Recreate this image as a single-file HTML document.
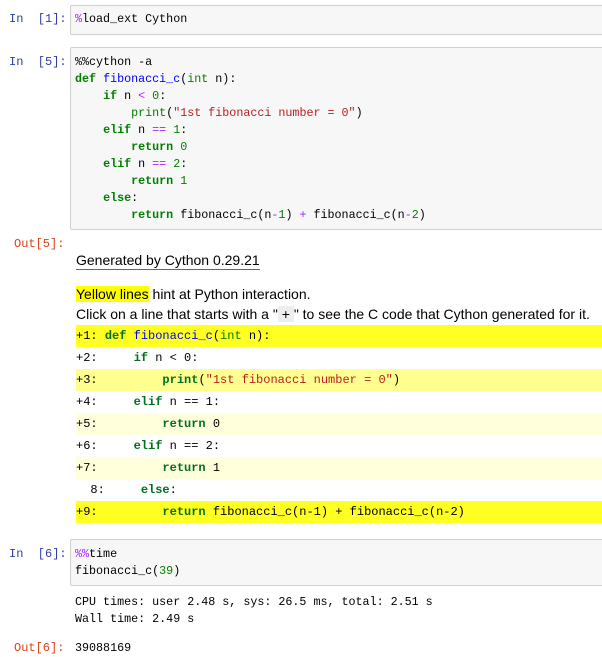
<!DOCTYPE html>
<html><head><style>
body{margin:0;background:#fff;width:602px;height:657px;overflow:hidden;position:relative;font-family:"Liberation Mono",monospace;}
.p{position:absolute;font-size:12px;color:#303f9f;white-space:pre;}
.o{color:#d84315;}
.box{position:absolute;left:70px;width:540px;background:#f7f7f7;border:1px solid #cfcfcf;border-radius:2px;box-sizing:border-box;}
.code{position:absolute;left:75px;font-size:11.7px;line-height:17px;white-space:pre;color:#000;}
.k{color:#008000;font-weight:bold}.f{color:#0000ff}.m{color:#aa22ff}.n{color:#008000}.s{color:#ba2121}
.sans{font-family:"Liberation Sans",sans-serif;font-size:14px;position:absolute;left:76px;white-space:pre;color:#000}
.ln{position:absolute;left:76px;width:526px;height:22px;line-height:22px;font-size:12px;white-space:pre;}
.ln .k{color:#007020}
</style></head><body>
<div class="p" style="left:9px;top:12px">In  [1]:</div>
<div class="box" style="top:5px;height:30px"></div>
<div class="code" style="top:11px"><span class="m">%</span>load_ext Cython</div>

<div class="p" style="left:9px;top:55px">In  [5]:</div>
<div class="box" style="top:47px;height:183px"></div>
<div class="code" style="top:54px">%%cython -a
<span class="k">def</span> <span class="f">fibonacci_c</span>(<span class="n">int</span> n):
    <span class="k">if</span> n <span class="m">&lt;</span> <span class="n">0</span>:
        <span class="n">print</span>(<span class="s">"1st fibonacci number = 0"</span>)
    <span class="k">elif</span> n <span class="m">==</span> <span class="n">1</span>:
        <span class="k">return</span> <span class="n">0</span>
    <span class="k">elif</span> n <span class="m">==</span> <span class="n">2</span>:
        <span class="k">return</span> <span class="n">1</span>
    <span class="k">else</span>:
        <span class="k">return</span> fibonacci_c(n<span class="m">-</span><span class="n">1</span>) <span class="m">+</span> fibonacci_c(n<span class="m">-</span><span class="n">2</span>)</div>

<div class="p o" style="left:14px;top:237px">Out[5]:</div>
<div class="sans" style="top:252px;border-bottom:1px solid #666;padding-bottom:1px">Generated by Cython 0.29.21</div>
<div class="sans" style="top:286px"><span style="background:#ffff00">Yellow lines</span> hint at Python interaction.</div>
<div class="sans" style="top:306px">Click on a line that starts with a "<span style="background:#eee"> + </span>" to see the C code that Cython generated for it.</div>

<div class="ln" style="top:325px;background:#ffff22">+1: <span class="k">def</span> <span class="f">fibonacci_c</span>(<span class="n">int</span> n):</div>
<div class="ln" style="top:347px;background:#fff">+2:     <span class="k">if</span> n &lt; 0:</div>
<div class="ln" style="top:369px;background:#ffff8f">+3:         <span class="k">print</span>(<span class="s">"1st fibonacci number = 0"</span>)</div>
<div class="ln" style="top:391px;background:#fff">+4:     <span class="k">elif</span> n == 1:</div>
<div class="ln" style="top:413px;background:#ffffdc">+5:         <span class="k">return</span> 0</div>
<div class="ln" style="top:435px;background:#fff">+6:     <span class="k">elif</span> n == 2:</div>
<div class="ln" style="top:457px;background:#ffffdc">+7:         <span class="k">return</span> 1</div>
<div class="ln" style="top:479px;background:#fff">  8:     <span class="k">else</span>:</div>
<div class="ln" style="top:501px;background:#ffff22">+9:         <span class="k">return</span> fibonacci_c(n-1) + fibonacci_c(n-2)</div>

<div class="p" style="left:9px;top:547px">In  [6]:</div>
<div class="box" style="top:539px;height:47px"></div>
<div class="code" style="top:546px"><span class="m">%%</span>time
fibonacci_c(<span class="n">39</span>)</div>
<div class="code" style="top:594px">CPU times: user 2.48 s, sys: 26.5 ms, total: 2.51 s
Wall time: 2.49 s</div>
<div class="p o" style="left:14px;top:641px">Out[6]:</div>
<div class="code" style="top:640px">39088169</div>
</body></html>
